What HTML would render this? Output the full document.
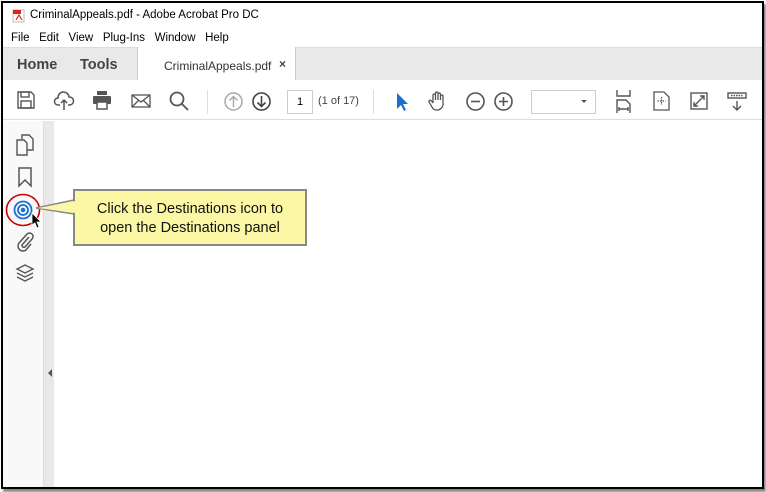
<!DOCTYPE html>
<html><head><style>
*{margin:0;padding:0;box-sizing:border-box}
body{width:766px;height:492px;background:#fff;position:relative;overflow:hidden;font-family:"Liberation Sans",sans-serif;}
.frame{position:absolute;left:1px;top:1px;width:763px;height:488px;border:2px solid #000;box-shadow:2px 3px 2px #888;background:#fff;overflow:hidden}
.abs{position:absolute}
.t{font-size:11.5px;color:#000;white-space:nowrap}
svg{position:absolute;overflow:visible}
</style></head><body>
<div class="frame">
  <!-- title -->
  <svg style="left:9px;top:6px" width="14" height="14" viewBox="0 0 14 14"><rect x="1" y="1" width="11" height="12" fill="#fff" stroke="#bbb"/><rect x="1" y="1" width="8" height="4" fill="#d22"/><path d="M4 11 L7 6 L10 11" stroke="#d22" fill="none" stroke-width="1.2"/></svg>
  <div class="abs t" style="left:27px;top:6px;font-size:11.5px">CriminalAppeals.pdf - Adobe Acrobat Pro DC</div>
  <!-- menu -->
  <div class="abs" style="left:0;top:26px;width:761px;height:19px;background:#fff"></div>
  <div class="abs t" style="left:8px;top:29px;word-spacing:0">File&nbsp;&nbsp;&nbsp;Edit&nbsp;&nbsp;&nbsp;View&nbsp;&nbsp;&nbsp;Plug-Ins&nbsp;&nbsp;&nbsp;Window&nbsp;&nbsp;&nbsp;Help</div>
  <!-- tabs -->
  <div class="abs" style="left:0;top:44px;width:761px;height:33px;background:#e9e9e9;border-top:1px solid #ddd"></div>
  <div class="abs" style="left:134px;top:44px;width:159px;height:33px;background:#fff;border-left:1px solid #ccc;border-right:1px solid #ccc"></div>
  <div class="abs" style="left:14px;top:54px;font-size:14.5px;font-weight:bold;color:#444">Home</div>
  <div class="abs" style="left:77px;top:54px;font-size:14.5px;font-weight:bold;color:#444">Tools</div>
  <div class="abs" style="left:161px;top:56px;font-size:12px;color:#333">CriminalAppeals.pdf</div>
  <div class="abs" style="left:276px;top:54px;font-size:12px;color:#444;font-weight:bold">×</div>
  <!-- toolbar -->
  <div class="abs" style="left:0;top:77px;width:761px;height:40px;background:#fff;border-bottom:1px solid #ddd"></div>
  <svg style="left:14px;top:88px" width="18" height="18" viewBox="0 0 18 18" fill="none" stroke="#555" stroke-width="1.4"><path d="M1 1H14L17 4V17H1Z"/><rect x="4" y="1" width="8" height="5"/><rect x="4" y="10" width="10" height="7"/></svg>
  <svg style="left:51px;top:88px" width="20" height="20" viewBox="0 0 20 20" fill="none" stroke="#555" stroke-width="1.5"><path d="M6 14H4A3.5 3.5 0 0 1 4 7A5.5 5.5 0 0 1 15 6A4 4 0 0 1 16 14H14"/><path d="M10 19V9M7 12L10 9L13 12"/></svg>
  <svg style="left:89px;top:88px" width="20" height="18" viewBox="0 0 20 18" fill="#555"><rect x="5" y="0" width="10" height="4"/><rect x="1" y="5" width="18" height="8" rx="1"/><rect x="5" y="11" width="10" height="7" fill="#fff" stroke="#555" stroke-width="1.5"/></svg>
  <svg style="left:128px;top:91px" width="20" height="14" viewBox="0 0 20 14" fill="none" stroke="#555" stroke-width="1.3"><rect x="1" y="1" width="18" height="12"/><path d="M1 1L10 8L19 1M1 13L8 6M19 13L12 6"/></svg>
  <svg style="left:166px;top:88px" width="20" height="20" viewBox="0 0 20 20" fill="none" stroke="#555" stroke-width="1.8"><circle cx="8" cy="8" r="6.5"/><path d="M13 13L19 19"/></svg>
  <div class="abs" style="left:204px;top:87px;width:1px;height:24px;background:#ddd"></div>
  <svg style="left:221px;top:89px" width="19" height="19" viewBox="0 0 19 19" fill="none" stroke="#aaa" stroke-width="1.5"><circle cx="9.5" cy="9.5" r="8.5"/><path d="M9.5 15V4.5M5.5 8.5L9.5 4.5L13.5 8.5"/></svg>
  <svg style="left:249px;top:89px" width="19" height="19" viewBox="0 0 19 19" fill="none" stroke="#444" stroke-width="1.6"><circle cx="9.5" cy="9.5" r="8.5"/><path d="M9.5 4V14.5M5.5 10.5L9.5 14.5L13.5 10.5"/></svg>
  <div class="abs" style="left:284px;top:87px;width:26px;height:24px;border:1px solid #ccc;font-size:11px;text-align:center;line-height:22px">1</div>
  <div class="abs" style="left:315px;top:92px;font-size:11px;color:#444">(1 of 17)</div>
  <div class="abs" style="left:370px;top:87px;width:1px;height:24px;background:#ddd"></div>
  <svg style="left:392px;top:89px" width="14" height="20" viewBox="0 0 14 20" fill="#1a6fd0"><path d="M2 1L13 12H8L11 18L9 19L6 13L2 17Z"/></svg>
  <svg style="left:424px;top:87px" width="22" height="22" viewBox="0 0 22 22" fill="none" stroke="#555" stroke-width="1.3"><path d="M6 13V5A1.3 1.3 0 0 1 8.5 5V10V3A1.3 1.3 0 0 1 11 3V10V4A1.3 1.3 0 0 1 13.5 4V10V6A1.3 1.3 0 0 1 16 6V14A6 6 0 0 1 10 20H9A5 5 0 0 1 5 17L2 12A1.3 1.3 0 0 1 4 10.5L6 13"/></svg>
  <svg style="left:463px;top:89px" width="19" height="19" viewBox="0 0 19 19" fill="none" stroke="#555" stroke-width="1.6"><circle cx="9.5" cy="9.5" r="8.5"/><path d="M5 9.5H14"/></svg>
  <svg style="left:491px;top:89px" width="19" height="19" viewBox="0 0 19 19" fill="none" stroke="#555" stroke-width="1.6"><circle cx="9.5" cy="9.5" r="8.5"/><path d="M5 9.5H14M9.5 5V14"/></svg>
  <div class="abs" style="left:528px;top:87px;width:65px;height:24px;border:1px solid #ccc;background:#fff"></div>
  <div class="abs" style="left:578px;top:97px;width:0;height:0;border-left:3px solid transparent;border-right:3px solid transparent;border-top:3px solid #555"></div>
  <svg style="left:612px;top:87px" width="18" height="24" viewBox="0 0 18 24" fill="none" stroke="#555" stroke-width="1.4"><path d="M2 0V6H15V0"/><path d="M2 23V10H11L15 14V23"/><path d="M4 19H13M4 17V21M13 17V21"/></svg>
  <svg style="left:650px;top:88px" width="17" height="20" viewBox="0 0 17 20" fill="none" stroke="#555" stroke-width="1.3"><path d="M1 1H11L16 6V19H1Z"/><path d="M8.5 6V14M4.5 10H12.5" stroke-dasharray="1.5 1"/></svg>
  <svg style="left:687px;top:89px" width="18" height="18" viewBox="0 0 18 18" fill="none" stroke="#555" stroke-width="1.4"><rect x="1" y="1" width="16" height="16"/><path d="M4 14L14 4M10 4H14V8M4 10V14H8" fill="none"/></svg>
  <svg style="left:724px;top:89px" width="20" height="20" viewBox="0 0 20 20" fill="none" stroke="#555" stroke-width="1.4"><rect x="1" y="1" width="18" height="5"/><path d="M4 3.5H16" stroke-dasharray="1.5 1"/><path d="M10 9V18M6 14L10 18L14 14"/></svg>
  <!-- side panel -->
  <div class="abs" style="left:0;top:118px;width:40px;height:370px;background:#f9f9f9"></div>
  <div class="abs" style="left:40px;top:118px;width:11px;height:370px;background:#e9e9e9;border-left:1px solid #ddd"></div>
  <div class="abs" style="left:45px;top:366px;width:0;height:0;border-top:4px solid transparent;border-bottom:4px solid transparent;border-right:4px solid #555"></div>
  <svg style="left:13px;top:131px" width="18" height="22" viewBox="0 0 18 22" fill="none" stroke="#555" stroke-width="1.4"><path d="M6 5V1H13L17 5V16H11"/><path d="M1 6H8L11 9V21H1Z"/></svg>
  <svg style="left:15px;top:164px" width="14" height="20" viewBox="0 0 14 20" fill="none" stroke="#555" stroke-width="1.5"><path d="M1 1H13V19L7 13L1 19Z"/></svg>
  <svg style="left:10px;top:197px" width="20" height="20" viewBox="0 0 20 20" fill="none" stroke="#1a6fd0" stroke-width="1.8"><circle cx="10" cy="10" r="8.5"/><circle cx="10" cy="10" r="5"/><circle cx="10" cy="10" r="1.4" fill="#1a6fd0"/></svg>
  <svg style="left:1px;top:190px" width="40" height="36" viewBox="0 0 40 36"><ellipse cx="19" cy="17" rx="16.5" ry="15.5" fill="none" stroke="#c00" stroke-width="1.6"/></svg>
  <svg style="left:28px;top:209px" width="12" height="16" viewBox="0 0 12 16"><path d="M1 1L10 10H6L8 15L6 16L4 11L1 13Z" fill="#000" stroke="#fff" stroke-width="0.8"/></svg>
  <svg style="left:13px;top:228px" width="18" height="20" viewBox="0 0 18 20" fill="none" stroke="#555" stroke-width="1.5"><path d="M13 6L6 14A2 2 0 0 0 9 16L16 8A3.5 3.5 0 0 0 11 3L3 12A5 5 0 0 0 10 19L15 13"/></svg>
  <svg style="left:12px;top:260px" width="20" height="20" viewBox="0 0 20 20" fill="none" stroke="#555" stroke-width="1.4"><path d="M10 2L18 6L10 10L2 6Z"/><path d="M2 10L10 14L18 10M2 14L10 18L18 14"/></svg>
  <!-- callout -->
  <svg style="left:0;top:0" width="320" height="260" viewBox="0 0 320 260"><path d="M71 197L33 205L71 211" fill="#fbf7a4" stroke="#888" stroke-width="1.5"/></svg>
  <div class="abs" style="left:70px;top:186px;width:234px;height:57px;background:#fbf7a4;border:2px solid #888"></div>
  <svg style="left:0;top:0" width="320" height="260" viewBox="0 0 320 260"><path d="M73 198L35 205L73 210Z" fill="#fbf7a4"/></svg>
  <div class="abs" style="left:72px;top:197px;width:230px;text-align:center;font-size:14.5px;line-height:19px;color:#111">Click the Destinations icon to<br>open the Destinations panel</div>
</div>
</body></html>
